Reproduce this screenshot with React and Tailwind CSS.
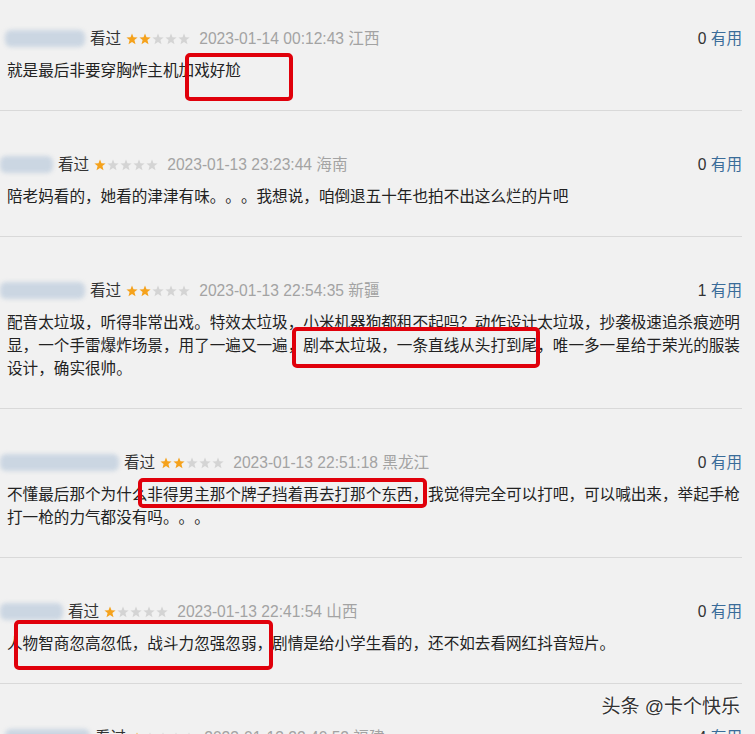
import React from 'react';

// 短评列表（截图复刻）。用户名做了模糊处理，红框是截图上的标注。
const REVIEWS = [
    {
        blur: 'ml-[5px] w-[80px]',
        stars: 2,
        time: '2023-01-14 00:12:43 江西',
        useful: 0,
        text: '就是最后非要穿胸炸主机加戏好尬',
    },
    {
        blur: 'w-[53px]',
        stars: 1,
        time: '2023-01-13 23:23:44 海南',
        useful: 0,
        text: '陪老妈看的，她看的津津有味。。。我想说，咱倒退五十年也拍不出这么烂的片吧',
    },
    {
        blur: 'w-[85px]',
        stars: 2,
        time: '2023-01-13 22:54:35 新疆',
        useful: 1,
        text: '配音太垃圾，听得非常出戏。特效太垃圾，小米机器狗都租不起吗？动作设计太垃圾，抄袭极速追杀痕迹明显，一个手雷爆炸场景，用了一遍又一遍，剧本太垃圾，一条直线从头打到尾，唯一多一星给于荣光的服装设计，确实很帅。',
    },
    {
        blur: 'w-[119px]',
        stars: 2,
        time: '2023-01-13 22:51:18 黑龙江',
        useful: 0,
        text: '不懂最后那个为什么非得男主那个牌子挡着再去打那个东西，我觉得完全可以打吧，可以喊出来，举起手枪打一枪的力气都没有吗。。。',
    },
    {
        blur: 'w-[63px]',
        stars: 1,
        time: '2023-01-13 22:41:54 山西',
        useful: 0,
        text: '人物智商忽高忽低，战斗力忽强忽弱，剧情是给小学生看的，还不如去看网红抖音短片。',
    },
    {
        blur: 'ml-[5px] w-[85px]',
        stars: 1,
        time: '2023-01-13 22:40:52 福建',
        useful: 4,
        text: '',
    },
];

function Star({ on }) {
    return (
        <svg width="12" height="12" viewBox="0 0 12 12" className="shrink-0">
            <polygon
                points="6,0.5 7.5,4.3 11.6,4.5 8.4,7.1 9.5,11.2 6,8.9 2.5,11.2 3.6,7.1 0.4,4.5 4.5,4.3"
                fill={on ? '#f5a21c' : '#d4d4d4'}
            />
        </svg>
    );
}

function Stars({ n }) {
    return (
        <span className="ml-[5px] flex gap-[1px]">
            {[1, 2, 3, 4, 5].map((i) => (
                <Star key={i} on={i <= n} />
            ))}
        </span>
    );
}

function Review({ r, first }) {
    return (
        <div className={`${first ? 'pt-[27px]' : 'pt-[42px]'} mr-[13px] border-b border-[#d9d9d9] pb-[29px]`}>
            <div className="flex h-[23px] items-center leading-[23px]">
                <span className={`${r.blur} h-[17px] shrink-0 rounded-[6px] bg-[#cbd6e2] blur-[2px]`} />
                <span className="ml-[5px] text-[#333]">看过</span>
                <Stars n={r.stars} />
                <span className="ml-[9px] text-[#a3a3a3]">{r.time}</span>
                <span className="ml-auto text-[#333]">
                    {r.useful} <span className="text-[#3a6c99]">有用</span>
                </span>
            </div>
            {r.text && (
                <p className="mt-[8px] pl-[7px] font-['Noto_Sans_CJK_SC',sans-serif] leading-[23px] text-[#222] [text-spacing-trim:space-all]">
                    {r.text}
                </p>
            )}
        </div>
    );
}

export default function App() {
    return (
        <div className="relative h-[734px] w-[755px] overflow-hidden bg-[#f1f1f1] font-['Liberation_Sans','Noto_Sans_CJK_SC',sans-serif] text-[15.6px]">
            {REVIEWS.map((r, i) => (
                <Review key={i} r={r} first={i === 0} />
            ))}

            {/* 截图上的红色标注框 */}
            <div className="absolute left-[185px] top-[53px] h-[48px] w-[108px] rounded-[5px] border-[4px] border-[#e0000b]" />
            <div className="absolute left-[292px] top-[327px] h-[41px] w-[248px] rounded-[5px] border-[4px] border-[#e0000b]" />
            <div className="absolute left-[138px] top-[478px] h-[30px] w-[289px] rounded-[5px] border-[4px] border-[#e0000b]" />
            <div className="absolute left-[14px] top-[620px] h-[50px] w-[259px] rounded-[5px] border-[4px] border-[#e0000b]" />

            {/* 水印 */}
            <div className="absolute right-[15px] top-[694px] text-[19px] leading-[26px] text-[#333] [text-shadow:0_0_2px_#fff,0_0_2px_#fff]">
                头条 @卡个快乐
            </div>
        </div>
    );
}
